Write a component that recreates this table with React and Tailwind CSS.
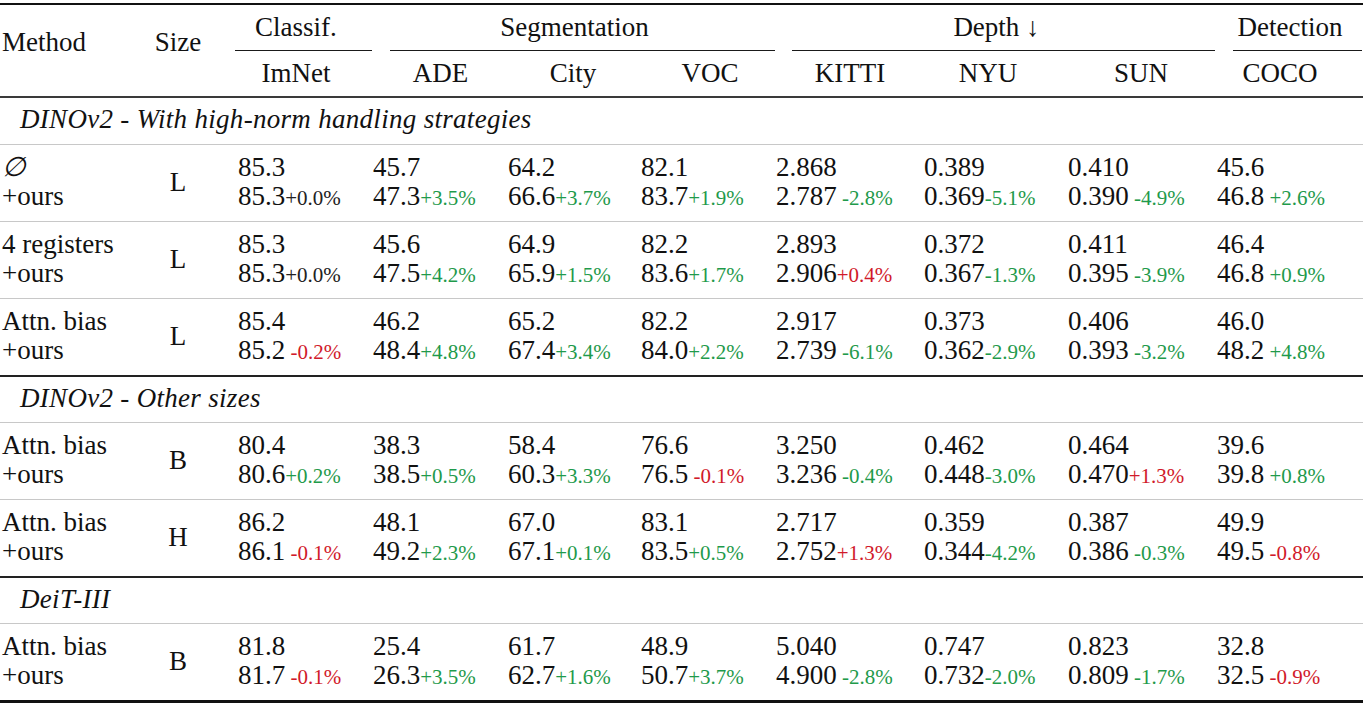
const cols = 'grid grid-cols-[148px_60px_165px_135px_133px_135px_148px_144px_149px_146px]';

const subHeads = [
  ['ImNet', 'col-start-3 pl-[11px]'],
  ['ADE', 'col-start-4'],
  ['City', 'col-start-5 pr-[3px]'],
  ['VOC', 'col-start-6 pl-[3px]'],
  ['KITTI', 'col-start-7'],
  ['NYU', 'col-start-8 pr-[16px]'],
  ['SUN', 'col-start-9 pr-[3px]'],
  ['COCO', 'col-start-10 pr-[20px]'],
];

const sections = [
  {
    title: 'DINOv2 - With high-norm handling strategies',
    pad: 'pt-[7px] pb-[10px]',
    rows: [
      {
        method: ['∅', '+ours'],
        size: 'L',
        cells: [
          ['85.3', '85.3', '+0.0%', 'k', 0],
          ['45.7', '47.3', '+3.5%', 'g', 0],
          ['64.2', '66.6', '+3.7%', 'g', 0],
          ['82.1', '83.7', '+1.9%', 'g', 0],
          ['2.868', '2.787', '-2.8%', 'g', 1],
          ['0.389', '0.369', '-5.1%', 'g', 0],
          ['0.410', '0.390', '-4.9%', 'g', 1],
          ['45.6', '46.8', '+2.6%', 'g', 1],
        ],
      },
      {
        method: ['4 registers', '+ours'],
        size: 'L',
        cells: [
          ['85.3', '85.3', '+0.0%', 'k', 0],
          ['45.6', '47.5', '+4.2%', 'g', 0],
          ['64.9', '65.9', '+1.5%', 'g', 0],
          ['82.2', '83.6', '+1.7%', 'g', 0],
          ['2.893', '2.906', '+0.4%', 'r', 0],
          ['0.372', '0.367', '-1.3%', 'g', 0],
          ['0.411', '0.395', '-3.9%', 'g', 1],
          ['46.4', '46.8', '+0.9%', 'g', 1],
        ],
      },
      {
        method: ['Attn. bias', '+ours'],
        size: 'L',
        cells: [
          ['85.4', '85.2', '-0.2%', 'r', 1],
          ['46.2', '48.4', '+4.8%', 'g', 0],
          ['65.2', '67.4', '+3.4%', 'g', 0],
          ['82.2', '84.0', '+2.2%', 'g', 0],
          ['2.917', '2.739', '-6.1%', 'g', 1],
          ['0.373', '0.362', '-2.9%', 'g', 0],
          ['0.406', '0.393', '-3.2%', 'g', 1],
          ['46.0', '48.2', '+4.8%', 'g', 1],
        ],
      },
    ],
  },
  {
    title: 'DINOv2 - Other sizes',
    pad: 'pt-[7px] pb-[9px]',
    rows: [
      {
        method: ['Attn. bias', '+ours'],
        size: 'B',
        cells: [
          ['80.4', '80.6', '+0.2%', 'g', 0],
          ['38.3', '38.5', '+0.5%', 'g', 0],
          ['58.4', '60.3', '+3.3%', 'g', 0],
          ['76.6', '76.5', '-0.1%', 'r', 1],
          ['3.250', '3.236', '-0.4%', 'g', 1],
          ['0.462', '0.448', '-3.0%', 'g', 0],
          ['0.464', '0.470', '+1.3%', 'r', 0],
          ['39.6', '39.8', '+0.8%', 'g', 1],
        ],
      },
      {
        method: ['Attn. bias', '+ours'],
        size: 'H',
        cells: [
          ['86.2', '86.1', '-0.1%', 'r', 1],
          ['48.1', '49.2', '+2.3%', 'g', 0],
          ['67.0', '67.1', '+0.1%', 'g', 0],
          ['83.1', '83.5', '+0.5%', 'g', 0],
          ['2.717', '2.752', '+1.3%', 'r', 0],
          ['0.359', '0.344', '-4.2%', 'g', 0],
          ['0.387', '0.386', '-0.3%', 'g', 1],
          ['49.9', '49.5', '-0.8%', 'r', 1],
        ],
      },
    ],
  },
  {
    title: 'DeiT-III',
    pad: 'pt-[7px] pb-[9px]',
    rows: [
      {
        method: ['Attn. bias', '+ours'],
        size: 'B',
        cells: [
          ['81.8', '81.7', '-0.1%', 'r', 1],
          ['25.4', '26.3', '+3.5%', 'g', 0],
          ['61.7', '62.7', '+1.6%', 'g', 0],
          ['48.9', '50.7', '+3.7%', 'g', 0],
          ['5.040', '4.900', '-2.8%', 'g', 1],
          ['0.747', '0.732', '-2.0%', 'g', 0],
          ['0.823', '0.809', '-1.7%', 'g', 1],
          ['32.8', '32.5', '-0.9%', 'r', 1],
        ],
      },
    ],
  },
];

const deltaColor = {
  g: 'text-[#1f9a4b]',
  r: 'text-[#d11a2a]',
  k: 'text-[#222]',
};

const Cell = ({ cell, first }) => {
  const [top, bottom, delta, color, spaced] = cell;
  return (
    <div className={first ? 'pl-[30px]' : ''}>
      <div>{top}</div>
      <div className="whitespace-pre">
        {bottom}
        <span className={`text-[21px] leading-none ${deltaColor[color]}`}>
          {spaced ? ' ' + delta : delta}
        </span>
      </div>
    </div>
  );
};

const Row = ({ row }) => (
  <div className={`${cols} pt-[8px] pb-[10px]`}>
    <div className="pl-[2px]">
      <div className={row.method[0] === '∅' ? 'italic' : ''}>{row.method[0]}</div>
      <div>{row.method[1]}</div>
    </div>
    <div className="flex items-center justify-center">{row.size}</div>
    {row.cells.map((c, i) => (
      <Cell key={i} cell={c} first={i === 0} />
    ))}
  </div>
);

const Header = () => (
  <div className={`${cols} grid-rows-[auto_auto_auto]`}>
    <div className="col-start-1 row-start-1 row-span-3 pl-[2px] pt-[23px]">Method</div>
    <div className="col-start-2 row-start-1 row-span-3 pt-[23px] text-center">Size</div>

    <div className="col-start-3 row-start-1 pt-[8px] pl-[11px] text-center">Classif.</div>
    <div className="col-start-4 col-span-3 row-start-1 pt-[8px] text-center">Segmentation</div>
    <div className="col-start-7 col-span-3 row-start-1 pt-[8px] text-center">Depth ↓</div>
    <div className="col-start-10 row-start-1 pt-[8px] text-center">Detection</div>

    <div className="col-start-3 row-start-2 pt-[8px] pl-[27px] pr-[1px]">
      <div className="h-px bg-[#1a1a1a]" />
    </div>
    <div className="col-start-4 col-span-3 row-start-2 pt-[8px] pl-[17px] pr-[1px]">
      <div className="h-px bg-[#1a1a1a]" />
    </div>
    <div className="col-start-7 col-span-3 row-start-2 pt-[8px] pl-[16px] pr-[2px]">
      <div className="h-px bg-[#1a1a1a]" />
    </div>
    <div className="col-start-10 row-start-2 pt-[8px] pl-[16px] pr-[1px]">
      <div className="h-px bg-[#1a1a1a]" />
    </div>

    {subHeads.map(([label, cls]) => (
      <div key={label} className={`row-start-3 pt-[8px] pb-[8px] text-center ${cls}`}>
        {label}
      </div>
    ))}
  </div>
);

export default function App() {
  return (
    <div className="min-h-screen w-[1367px] bg-white font-['Liberation_Serif','Times_New_Roman',serif] text-[27px] leading-[29px] text-[#111]">
      <div className="w-[1363px] pt-[3px]">
        <div className="h-[2px] bg-[#111]" />
        <Header />
        <div className="h-[2px] bg-[#3a3a3a]" />
        {sections.map((s, si) => (
          <div key={s.title}>
            {si > 0 && <div className="h-[2px] bg-[#222]" />}
            <div className={`pl-[20px] italic tracking-[0.3px] ${s.pad}`}>{s.title}</div>
            {s.rows.map((r, ri) => (
              <div key={ri}>
                <div className="h-px bg-[#c8c8c8]" />
                <Row row={r} />
              </div>
            ))}
          </div>
        ))}
        <div className="h-[3px] bg-[#111]" />
      </div>
    </div>
  );
}
